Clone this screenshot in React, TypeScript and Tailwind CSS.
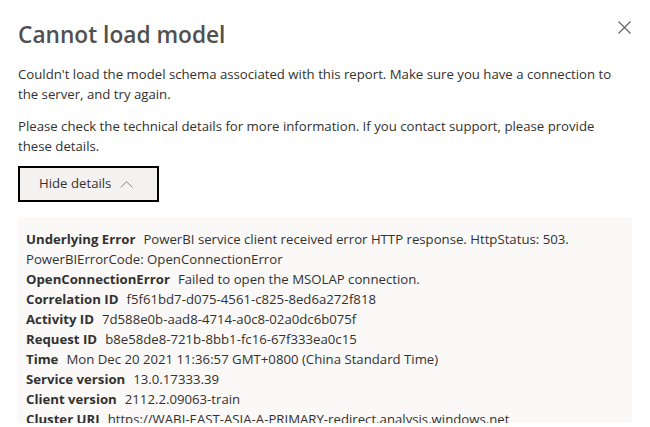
import React from 'react';

const DETAILS: { label: string; value: React.ReactNode }[] = [
  {
    label: 'Underlying Error',
    value: (
      <>
        PowerBI service client received error HTTP response. HttpStatus: 503.
        <br />
        PowerBIErrorCode: OpenConnectionError
      </>
    ),
  },
  { label: 'OpenConnectionError', value: 'Failed to open the MSOLAP connection.' },
  { label: 'Correlation ID', value: 'f5f61bd7-d075-4561-c825-8ed6a272f818' },
  { label: 'Activity ID', value: '7d588e0b-aad8-4714-a0c8-02a0dc6b075f' },
  { label: 'Request ID', value: 'b8e58de8-721b-8bb1-fc16-67f333ea0c15' },
  { label: 'Time', value: 'Mon Dec 20 2021 11:36:57 GMT+0800 (China Standard Time)' },
  { label: 'Service version', value: '13.0.17333.39' },
  { label: 'Client version', value: '2112.2.09063-train' },
  { label: 'Cluster URI', value: 'https://WABI-EAST-ASIA-A-PRIMARY-redirect.analysis.windows.net' },
];

export default function App() {
  return (
    <div className="w-[650px] h-[427px] bg-white overflow-hidden font-['Open_Sans',sans-serif] text-[#323130]">
      <div className="relative px-[18px] pt-[19px]">
        <h1 className="text-[22.7px] leading-[32px] font-semibold text-[#505050]">Cannot load model</h1>
        <button className="absolute right-[19px] top-[21px] w-[13px] h-[13px] text-[#605e5c]">
          <svg viewBox="0 0 13 13" width="13" height="13" fill="none" stroke="currentColor" strokeWidth="1.1">
            <path d="M0.5 0.5 L12.5 12.5 M12.5 0.5 L0.5 12.5" />
          </svg>
        </button>

        <p className="mt-[13px] text-[13.2px] leading-[20px] pr-[10px]">
          Couldn't load the model schema associated with this report. Make sure you have a connection to the server, and try again.
        </p>
        <p className="mt-[12px] text-[13.2px] leading-[20px] pr-[10px]">
          Please check the technical details for more information. If you contact support, please provide these details.
        </p>

        <button className="mt-[10px] flex items-center gap-[9px] h-[36px] w-[141px] pl-[19px] border-2 border-black bg-[#f3f2f1] text-[13.2px] text-[#323130]">
          <span>Hide details</span>
          <svg viewBox="0 0 13 7" width="13" height="7" fill="none" stroke="#8a8886" strokeWidth="1">
            <path d="M0.5 6.5 L6.5 0.7 L12.5 6.5" />
          </svg>
        </button>

        <div className="mt-[15px] w-[614px] h-[206px] overflow-hidden bg-[#faf9f8] pl-[8px] pt-[12px] text-[13.2px] leading-[20px]">
          {DETAILS.map((d) => (
            <div key={d.label}>
              <span className="font-bold mr-[8px]">{d.label}</span>
              <span>{d.value}</span>
            </div>
          ))}
        </div>
      </div>
    </div>
  );
}
